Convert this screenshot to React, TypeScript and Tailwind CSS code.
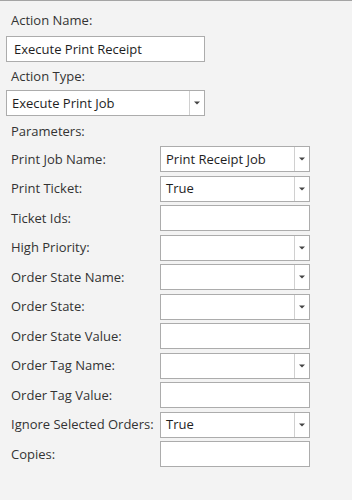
const params: { label: string; kind: "text" | "select"; value?: string }[] = [
  { label: "Print Job Name:", kind: "select", value: "Print Receipt Job" },
  { label: "Print Ticket:", kind: "select", value: "True" },
  { label: "Ticket Ids:", kind: "text" },
  { label: "High Priority:", kind: "select" },
  { label: "Order State Name:", kind: "select" },
  { label: "Order State:", kind: "select" },
  { label: "Order State Value:", kind: "text" },
  { label: "Order Tag Name:", kind: "select" },
  { label: "Order Tag Value:", kind: "text" },
  { label: "Ignore Selected Orders:", kind: "select", value: "True" },
  { label: "Copies:", kind: "text" },
];

const Arrow = () => (
  <svg width="6" height="4" viewBox="0 0 6 4" className="block">
    <path d="M0 0.5h6L3 3.5z" fill="#444" />
  </svg>
);

const TextBox = ({ value, className = "" }: { value?: string; className?: string }) => (
  <div className={`h-[26px] bg-white border border-[#acacac] flex items-center pl-[7px] text-[#1e1e1e] ${className}`}>
    {value}
  </div>
);

const Combo = ({ value, className = "" }: { value?: string; className?: string }) => (
  <div className={`h-[26px] bg-white border border-[#acacac] flex items-stretch text-[#1e1e1e] ${className}`}>
    <div className="flex-1 flex items-center pl-[5px]">{value}</div>
    <div className="w-[15px] border-l border-[#d0d0d0] flex items-center justify-center">
      <Arrow />
    </div>
  </div>
);

export default function App() {
  return (
    <div
      className="w-[352px] h-[500px] bg-[#f3f3f3] border-t border-[#a4a4a4] text-[13px] leading-[17px] text-[#333] overflow-hidden"
      style={{ fontFamily: '"Segoe UI", "Open Sans", sans-serif' }}
    >
      <div className="pl-[6px] pt-[11px]">
        <div className="pl-[5px] h-[17px]">Action Name:</div>
        <TextBox value="Execute Print Receipt" className="w-[199px] mt-[7px]" />
        <div className="pl-[5px] h-[28px] flex items-center">Action Type:</div>
        <Combo value="Execute Print Job" className="w-[199px]" />
        <div className="pl-[5px] h-[30px] flex items-center">Parameters:</div>
        <div className="flex flex-col gap-[3.5px]">
          {params.map((p) => (
            <div key={p.label} className="flex items-center">
              <div className="w-[154px] pl-[5px] whitespace-nowrap">{p.label}</div>
              {p.kind === "select" ? (
                <Combo value={p.value} className="w-[150px]" />
              ) : (
                <TextBox className="w-[150px]" />
              )}
            </div>
          ))}
        </div>
      </div>
    </div>
  );
}
